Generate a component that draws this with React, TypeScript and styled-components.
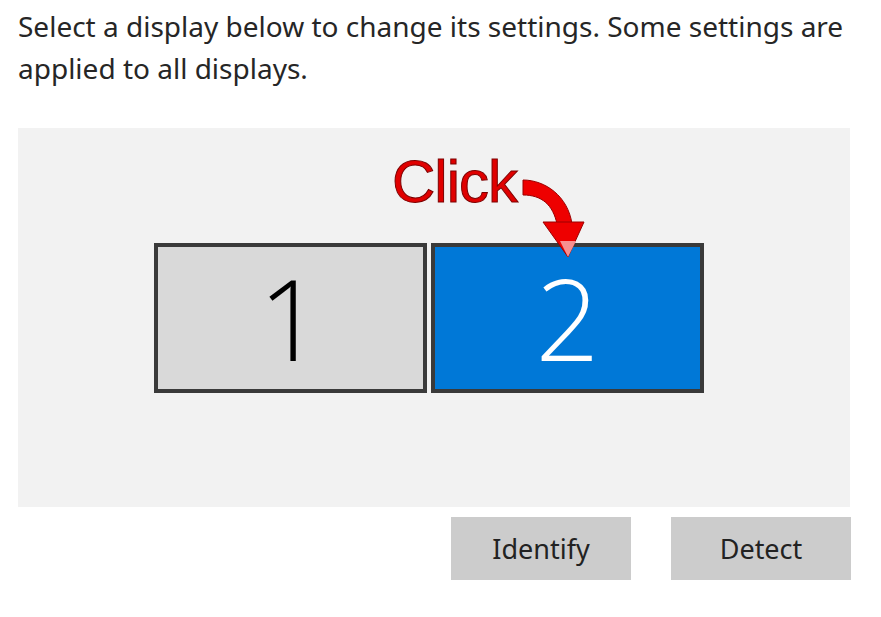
import styled, { createGlobalStyle } from "styled-components";

const GlobalStyle = createGlobalStyle`
  body {
    margin: 0;
    background: #ffffff;
    font-family: "Segoe UI", "Noto Sans", "Open Sans", sans-serif;
  }
`;

const Page = styled.div`
  width: 881px;
  height: 617px;
  padding: 5px 0 0 18px;
  box-sizing: border-box;
  overflow: hidden;
`;

const Intro = styled.p`
  margin: 0;
  width: 845px;
  font-size: 28px;
  line-height: 42px;
  color: #262626;
`;

const Arrangement = styled.div`
  position: relative;
  width: 832px;
  height: 379px;
  margin-top: 39px;
  background: #f2f2f2;
  display: flex;
  justify-content: center;
  align-items: center;
  gap: 4px;
  padding-right: 10px;
  box-sizing: border-box;
`;

const Monitor = styled.div<{ $active?: boolean }>`
  width: 273px;
  height: 150px;
  box-sizing: border-box;
  border: 4px solid #3a3a3a;
  background: ${(p) => (p.$active ? "#0078d7" : "#d9d9d9")};
  color: ${(p) => (p.$active ? "#ffffff" : "#000000")};
  display: flex;
  justify-content: center;
  align-items: center;
  font-family: "Open Sans", "Noto Sans", sans-serif;
  font-weight: 300;
  font-size: 112px;
  line-height: 1;
`;

const Callout = styled.div`
  position: absolute;
  left: 374px;
  top: 26px;
  width: 200px;
  height: 140px;
  pointer-events: none;
`;

const ClickLabel = styled.span`
  position: absolute;
  left: 0;
  top: -2px;
  font-family: "Liberation Sans", Arial, sans-serif;
  font-size: 60px;
  letter-spacing: -1px;
  line-height: 1;
  color: #e00000;
  -webkit-text-stroke: 1px #7a0000;
`;

const ArrowSvg = styled.svg`
  position: absolute;
  left: 0;
  top: 0;
`;

const Actions = styled.div`
  display: flex;
  justify-content: flex-end;
  gap: 40px;
  width: 833px;
  margin-top: 10px;
`;

const Button = styled.button`
  width: 180px;
  height: 63px;
  border: none;
  background: #cccccc;
  color: #222222;
  font-family: "Segoe UI", "Noto Sans", "Open Sans", sans-serif;
  font-size: 27px;
  padding: 0;
`;

export default function App() {
  return (
    <>
      <GlobalStyle />
      <Page>
        <Intro>
          Select a display below to change its settings. Some settings are
          applied to all displays.
        </Intro>
        <Arrangement>
          <Monitor>1</Monitor>
          <Monitor $active>2</Monitor>
          <Callout>
            <ClickLabel>Click</ClickLabel>
            <ArrowSvg width="200" height="140" viewBox="0 0 200 140">
              <path
                d="M131 26 C153 26 176 42 180 70 L165 70 C161 51 150 41 131 41 Z"
                fill="#ee0000"
                stroke="#9a0000"
                strokeWidth="1"
              />
              <path
                d="M151 68 L192 68 L176 103 Z"
                fill="#ee0000"
                stroke="#9a0000"
                strokeWidth="1"
              />
              <path d="M168 87 L184 87 L176 103 Z" fill="#f79090" />
            </ArrowSvg>
          </Callout>
        </Arrangement>
        <Actions>
          <Button>Identify</Button>
          <Button>Detect</Button>
        </Actions>
      </Page>
    </>
  );
}
